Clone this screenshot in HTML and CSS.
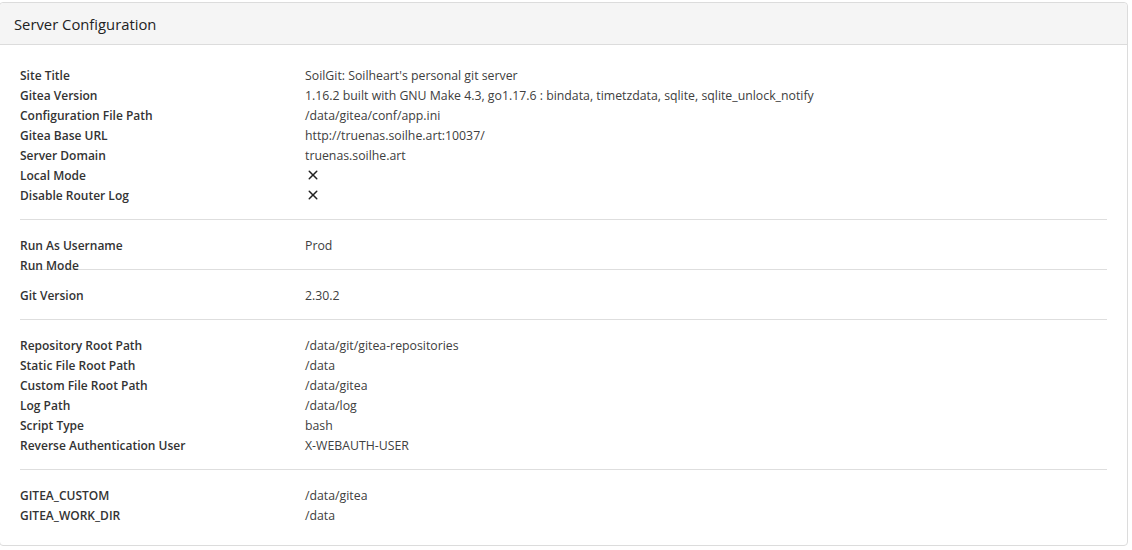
FILE: index.html
```html
<!DOCTYPE html>
<html>
  <head>
    <meta charset="UTF-8">
    <title>Server Configuration</title>
    <link rel="stylesheet" href="styles.css">
  </head>
  <body>
    <div class="panel">
      <h4 class="panel-header">Server Configuration</h4>
      <div class="panel-body">
        <dl class="config">
          <dt>Site Title</dt>
          <dd>SoilGit: Soilheart's personal git server</dd>
          <dt>Gitea Version</dt>
          <dd>1.16.2 built with GNU Make 4.3, go1.17.6 : bindata, timetzdata, sqlite, sqlite_unlock_notify</dd>
          <dt>Configuration File Path</dt>
          <dd>/data/gitea/conf/app.ini</dd>
          <dt>Gitea Base URL</dt>
          <dd>http://truenas.soilhe.art:10037/</dd>
          <dt>Server Domain</dt>
          <dd>truenas.soilhe.art</dd>
          <dt>Local Mode</dt>
          <dd><svg class="icon-x" viewBox="0 0 16 16" width="16" height="16"><path d="M3.72 3.72a.75.75 0 011.06 0L8 6.94l3.22-3.22a.75.75 0 111.06 1.06L9.06 8l3.22 3.22a.75.75 0 11-1.06 1.06L8 9.06l-3.220 3.22a.75.75 0 01-1.06-1.06L6.94 8 3.72 4.78a.75.75 0 010-1.06z"/></svg></dd>
          <dt>Disable Router Log</dt>
          <dd><svg class="icon-x" viewBox="0 0 16 16" width="16" height="16"><path d="M3.72 3.72a.75.75 0 011.06 0L8 6.94l3.22-3.22a.75.75 0 111.06 1.06L9.06 8l3.22 3.22a.75.75 0 11-1.06 1.06L8 9.06l-3.22 3.22a.75.75 0 01-1.06-1.06L6.94 8 3.72 4.78a.75.75 0 010-1.06z"/></svg></dd>

          <div class="divider"></div>

          <dt>Run As Username</dt>
          <dd>Prod</dd>
          <dt>Run Mode</dt>
          <dd></dd>

          <div class="divider"></div>

          <dt>Git Version</dt>
          <dd>2.30.2</dd>

          <div class="divider"></div>

          <dt>Repository Root Path</dt>
          <dd>/data/git/gitea-repositories</dd>
          <dt>Static File Root Path</dt>
          <dd>/data</dd>
          <dt>Custom File Root Path</dt>
          <dd>/data/gitea</dd>
          <dt>Log Path</dt>
          <dd>/data/log</dd>
          <dt>Script Type</dt>
          <dd>bash</dd>
          <dt>Reverse Authentication User</dt>
          <dd>X-WEBAUTH-USER</dd>

          <div class="divider"></div>

          <dt>GITEA_CUSTOM</dt>
          <dd>/data/gitea</dd>
          <dt>GITEA_WORK_DIR</dt>
          <dd>/data</dd>
        </dl>
      </div>
    </div>
  </body>
</html>
```

FILE: styles.css
```css
body {
  margin: 0;
  padding-top: 2px;
  background: #fff;
  font-family: "Open Sans", "Noto Sans", sans-serif;
  font-size: 12.3px;
  color: #404040;
}

.panel {
  box-sizing: border-box;
  width: 1129px;
  margin-left: -1px;
  border: 1px solid #dcdcdc;
  border-radius: 4px;
  background: #fff;
}

.panel-header {
  margin: 0;
  height: 41px;
  line-height: 42px;
  padding: 0 14px;
  background: #f5f5f5;
  border-bottom: 1px solid #dcdcdc;
  border-radius: 4px 4px 0 0;
  font-size: 14.8px;
  font-weight: 500;
  color: #222;
}

.panel-body {
  padding: 20px 20px;
}

.config {
  margin: 0;
}

.config dt,
.config dd {
  padding-top: 1px;
  line-height: 19px;
}

.config dt {
  float: left;
  clear: left;
  width: 285px;
  font-size: 12px;
  font-weight: 600;
  color: #333;
}

.config dd {
  margin: 0 0 0 285px;
}

.config dd:empty {
  padding-top: 0;
}

.config .divider {
  height: 0;
  border-top: 1px solid #dedede;
  margin: 14px 0 15px;
}

.icon-x {
  vertical-align: -3px;
  fill: #222;
}
```
